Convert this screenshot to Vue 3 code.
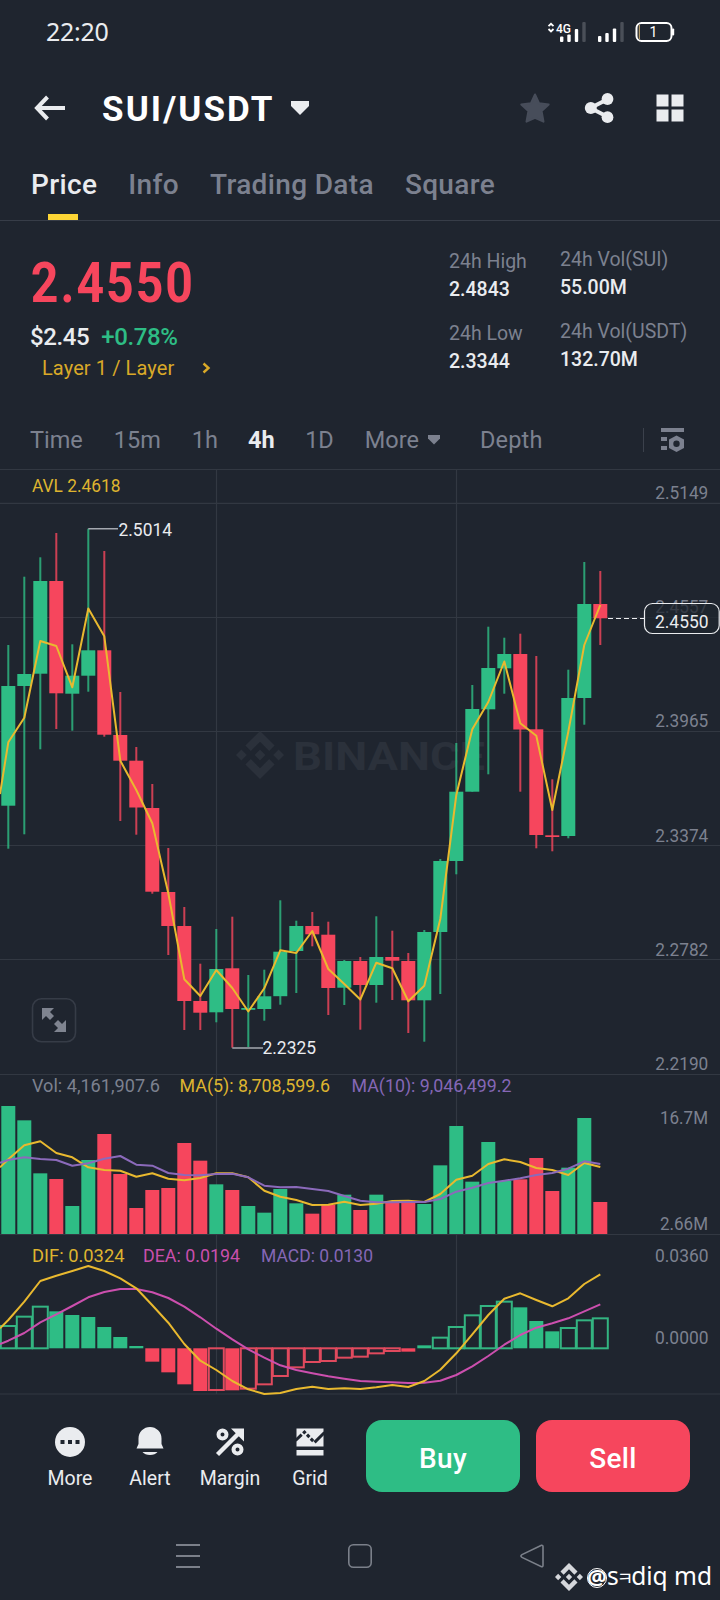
<template>
  <div class="screen">
    <div class="status">
      <span class="clock">22:20</span>
      <svg width="130" height="24" viewBox="546 20 130 24">
        <path d="M548.5 26.2 551 23.8l2.500 2.400M548.500 29l2.500 2.400 2.500-2.400" fill="none" stroke="#fff" stroke-width="1.800" />
        <text x="556" y="33" font-size="12.500" font-weight="500" fill="#fff" textLength="15" lengthAdjust="spacingAndGlyphs">4G</text>
        <g fill="#fff">
          <rect x="560" y="36.500" width="3.400" height="5.500" rx="1" />
          <rect x="567.300" y="34.500" width="3.400" height="7.500" rx="1" />
          <rect x="574.800" y="29" width="3.400" height="13" rx="1" />
          <rect x="598" y="36" width="3.400" height="6" rx="1" />
          <rect x="605.300" y="33" width="3.400" height="9" rx="1" />
          <rect x="612.800" y="28.500" width="3.400" height="13.500" rx="1" />
        </g>
        <rect x="582.300" y="22" width="3.400" height="20" rx="1" fill="#4a4f58" />
        <rect x="620.300" y="22" width="3.400" height="20" rx="1" fill="#4a4f58" />
        <rect x="636.500" y="23" width="35" height="18" rx="5" fill="none" stroke="#fff" stroke-width="2" />
        <path d="M639.300 25v14" stroke="#d9b97a" stroke-width="1" />
        <rect x="672" y="28.500" width="2.200" height="7" rx="1" fill="#fff" />
        <text x="649.500" y="37" font-size="14" fill="#fff">1</text>
      </svg>
    </div>

    <header class="header">
      <svg class="back" width="32" height="26" viewBox="0 0 32 26">
        <path d="M13.500 2 3 13l10.500 11M3 13h28" fill="none" stroke="#eaecef" stroke-width="4" />
      </svg>
      <h1 class="pair">SUI/USDT</h1>
      <svg width="20" height="14" viewBox="0 0 20 14">
        <path d="M1 0h18v5l-9 9-9-9z" fill="#eaecef" />
      </svg>
      <div class="header-icons">
        <svg width="32" height="32" viewBox="0 0 32 32">
          <path d="M16 2.500 20 11.200l9.700 1.200-7.100 6.700 1.900 10.600L16 25.900l-8.500 3.800 1.900-10.600-7.100-6.700L12 11.200z" fill="#474d5a" stroke="#474d5a" stroke-width="2" stroke-linejoin="round" />
        </svg>
        <svg width="32" height="32" viewBox="0 0 32 32">
          <path d="M25 7 7.500 16 25 25" fill="none" stroke="#eaecef" stroke-width="4" />
          <circle cx="24.500" cy="7" r="5.900" fill="#eaecef" />
          <circle cx="7.800" cy="16" r="6" fill="#eaecef" />
          <circle cx="24.500" cy="25.200" r="5.900" fill="#eaecef" />
        </svg>
        <svg width="28" height="28" viewBox="0 0 28 28">
          <path d="M.500.500h12v12H.500zM15.500.500h12v12h-12zM.500 15.500h12v12H.500zM15.500 15.500h12v12h-12z" fill="#eaecef" />
        </svg>
      </div>
    </header>

    <nav class="tabs">
      <span v-for="(tab, i) in tabs" :key="tab" class="tab" :class="{ active: i === 0 }">{{ tab }}</span>
    </nav>

    <section class="summary">
      <div class="quote">
        <div class="last">2.4550</div>
        <div class="change">
          <span class="usd">$2.45</span>
          <span class="pct">+0.78%</span>
        </div>
        <div class="category">
          <span>Layer 1 / Layer</span>
          <svg width="9" height="12" viewBox="0 0 9 12">
            <path d="M1.500 1.500 6.500 6l-5 4.500" fill="none" stroke="#d9a928" stroke-width="2.400" />
          </svg>
        </div>
      </div>
      <div class="stats prices">
        <div class="stat"><span>24h High</span><b>2.4843</b></div>
        <div class="stat"><span>24h Low</span><b>2.3344</b></div>
      </div>
      <div class="stats volumes">
        <div class="stat"><span>24h Vol(SUI)</span><b>55.00M</b></div>
        <div class="stat"><span>24h Vol(USDT)</span><b>132.70M</b></div>
      </div>
    </section>

    <div class="intervals">
      <span>Time</span>
      <span>15m</span>
      <span>1h</span>
      <span class="current">4h</span>
      <span>1D</span>
      <span class="more">
        More
        <svg width="14" height="10" viewBox="0 0 14 10"><path d="M1 0h12v3.500L7 9.500l-6-6z" fill="#7c818f" /></svg>
      </span>
      <span class="depth">Depth</span>
      <i class="divider"></i>
      <svg width="25" height="26" viewBox="0 0 25 26">
        <g fill="#7c818f">
          <path d="M1 1h23v4H1zM1 10h6v4H1zM1 19h6v4H1z" />
          <path fill-rule="evenodd" d="M16.500 8.500 24 12.500v8.500l-7.500 4-7.500-4v-8.500zM16.500 13.600a3.200 3.200 0 1 0 0 6.400 3.200 3.200 0 1 0 0-6.400z" />
        </g>
      </svg>
    </div>

    <section class="charts">
      <!-- price -->
      <svg width="720" height="605" viewBox="0 469 720 605">
        <path class="grid" d="M0 469.500H720M0 503.300H720M0 617.500H720M0 731.500H720M0 845.500H720M0 959.500H720M216.500 469V1074M456.500 469V1074" />
        <g class="mark">
          <path :d="logo" transform="translate(236 731) scale(2)" />
          <text x="293" y="770" font-size="38" font-weight="700" textLength="192" lengthAdjust="spacingAndGlyphs">BINANCE</text>
        </g>
        <text v-for="l in priceLabels" :key="l[0]" class="axis" x="655.300" :y="l[1]" textLength="53" lengthAdjust="spacingAndGlyphs">{{ l[0] }}</text>
        <g v-for="(c, i) in candles" :key="i" :class="c[0]">
          <rect :x="cx(i) - 1" :y="c[1]" width="2" :height="c[4] - c[1]" opacity="0.800" />
          <rect :x="cx(i) - 7" :y="c[2]" width="14" :height="c[3] - c[2]" />
        </g>
        <polyline class="line yellow" :points="avlPoints" />
        <path d="M88.300 528.800H118M232.300 1048H263" stroke="#a4a8b0" stroke-width="1.500" />
        <text class="yellow" x="32" y="491.700" textLength="88.500" lengthAdjust="spacingAndGlyphs">AVL 2.4618</text>
        <text class="light" x="118.500" y="536" textLength="53.500" lengthAdjust="spacingAndGlyphs">2.5014</text>
        <text class="light" x="262.500" y="1054.300" textLength="53.500" lengthAdjust="spacingAndGlyphs">2.2325</text>
        <path d="M608 618.500H644" stroke="#eaecef" stroke-width="1.200" stroke-dasharray="5 3" />
        <rect x="644.500" y="603.500" width="74.700" height="30" rx="8" fill="#1f252f" fill-opacity="0.750" stroke="#eaecef" stroke-width="1.200" />
        <text class="light" x="655" y="627.700" textLength="53.500" lengthAdjust="spacingAndGlyphs">2.4550</text>
        <rect x="32.500" y="998.800" width="43" height="43" rx="9" fill="#1f252f" stroke="#363c47" stroke-width="1.600" />
        <path d="M42 1008h12l-4 4 4 4-4 4-4-4-4 4zM66 1032H54l4-4-4-4 4-4 4 4 4-4z" fill="#7f8490" />
      </svg>

      <!-- volume -->
      <svg width="720" height="160" viewBox="0 1074 720 160">
        <path class="grid" d="M0 1074.500H720M216.500 1074V1234M456.500 1074V1234" />
        <rect v-for="(v, i) in volumes" :key="i" :class="candles[i][0]" :x="cx(i) - 7" :y="sub(v)" width="14" :height="1234 - sub(v)" />
        <polyline class="line yellow" :points="toPoints(ma5)" />
        <polyline class="line purple" :points="toPoints(ma10)" />
        <text class="axis" x="32" y="1092" textLength="128" lengthAdjust="spacingAndGlyphs">Vol: 4,161,907.6</text>
        <text class="yellow" x="179.500" y="1092" textLength="150.500" lengthAdjust="spacingAndGlyphs">MA(5): 8,708,599.6</text>
        <text class="purple" x="351.500" y="1092" textLength="160" lengthAdjust="spacingAndGlyphs">MA(10): 9,046,499.2</text>
        <text class="axis" x="660" y="1124" textLength="48" lengthAdjust="spacingAndGlyphs">16.7M</text>
        <text class="axis" x="660" y="1230" textLength="48" lengthAdjust="spacingAndGlyphs">2.66M</text>
      </svg>

      <!-- MACD -->
      <svg width="720" height="161" viewBox="0 1234 720 161">
        <path class="grid" d="M0 1234.300H720M0 1394H720M216.500 1234V1394M456.500 1234V1394" />
        <template v-for="(m, i) in macd" :key="i">
          <rect v-if="m[1]" :class="['hollow', macdSide(m[0])]" :x="cx(i) - 7.500" :y="Math.min(sub(m[0]), zero)" width="15" :height="Math.abs(sub(m[0]) - zero)" />
          <rect v-else :class="macdSide(m[0])" :x="cx(i) - 7" :y="Math.min(sub(m[0]), zero)" width="14" :height="Math.abs(sub(m[0]) - zero)" />
        </template>
        <polyline class="line pink" :points="toPoints(dea)" />
        <polyline class="line yellow" :points="toPoints(dif)" />
        <text class="yellow" x="32" y="1262" textLength="92.500" lengthAdjust="spacingAndGlyphs">DIF: 0.0324</text>
        <text class="pink" x="143" y="1262" textLength="97" lengthAdjust="spacingAndGlyphs">DEA: 0.0194</text>
        <text class="purple" x="261" y="1262" textLength="112" lengthAdjust="spacingAndGlyphs">MACD: 0.0130</text>
        <text class="axis" x="655" y="1262" textLength="53.500" lengthAdjust="spacingAndGlyphs">0.0360</text>
        <text class="axis" x="655" y="1344" textLength="53.500" lengthAdjust="spacingAndGlyphs">0.0000</text>
      </svg>
    </section>

    <footer class="actions">
      <div class="action">
        <svg width="32" height="32" viewBox="0 0 32 32">
          <circle cx="16" cy="16" r="15" fill="#eaecef" />
          <path d="M6.500 14h4v4h-4zM14 14h4v4h-4zM21.500 14h4v4h-4z" fill="#1f252f" />
        </svg>
        <span>More</span>
      </div>
      <div class="action">
        <svg width="32" height="32" viewBox="0 0 32 32">
          <path d="M2.500 22.500 4.500 18v-5.500a11.500 11.500 0 0 1 23 0V18l2 4.500zM8.500 26h15a8.500 5.500 0 0 1-15 0z" fill="#eaecef" />
        </svg>
        <span>Alert</span>
      </div>
      <div class="action">
        <svg width="32" height="32" viewBox="0 0 32 32">
          <g fill="none" stroke="#eaecef">
            <circle cx="8.500" cy="8.500" r="4" stroke-width="4" />
            <circle cx="23.500" cy="23.500" r="4" stroke-width="4" />
            <path d="M3.500 28.500 24 8" stroke-width="4.400" />
          </g>
          <path d="M17 2.500h13v13z" fill="#eaecef" />
        </svg>
        <span>Margin</span>
      </div>
      <div class="action">
        <svg width="32" height="32" viewBox="0 0 32 32">
          <path d="M2.500 2.500h27v18h-27zM2.500 24h27v5.500h-27z" fill="#eaecef" />
          <path d="M1.500 14.500 10.500 6 20.500 16.500 30.500 6.500" fill="none" stroke="#1f252f" stroke-width="3" stroke-dasharray="8.500 2 3.500 2 3.500 2 3.500 2 20" />
        </svg>
        <span>Grid</span>
      </div>
      <button class="trade buy">Buy</button>
      <button class="trade sell">Sell</button>
    </footer>

    <div class="system-nav">
      <svg width="26" height="26" viewBox="0 0 26 26"><path d="M1 2h24M1 13h24M1 24h24" stroke="#7b808a" stroke-width="2" /></svg>
      <svg width="26" height="26" viewBox="0 0 26 26"><rect x="1.800" y="1.800" width="22.400" height="22.400" rx="4.500" fill="none" stroke="#7b808a" stroke-width="1.600" /></svg>
      <svg width="26" height="26" viewBox="0 0 26 26"><path d="M22.500 2.200 3 11.600q-2.200 1.400 0 2.800l19.500 9.400q1.500.200 1.500-1.500V3.700q0-1.700-1.500-1.500z" fill="none" stroke="#7b808a" stroke-width="1.600" /></svg>
    </div>

    <div class="author">
      <svg width="28" height="28" viewBox="0 0 24 24"><path :d="logo" fill="#d5d7db" /></svg>
      <span class="handle"><span class="at">@</span>s<small>ㅋ</small>diq md</span>
    </div>
  </div>
</template>

<script setup>
const tabs = ["Price", "Info", "Trading Data", "Square"];

const logo =
  "M12 0 4.700 7.300 7.400 10 12 5.400 16.600 10l2.700-2.700zM0 12l2.700-2.700L5.400 12l-2.700 2.700zM9.300 12 12 9.300l2.700 2.700-2.700 2.700zM18.600 12l2.700-2.700L24 12l-2.700 2.700zM4.700 16.700 7.400 14l4.600 4.600 4.600-4.600 2.700 2.700L12 24z";

const priceLabels = [
  ["2.5149", 499.3],
  ["2.4557", 613.3],
  ["2.3965", 727],
  ["2.3374", 842.3],
  ["2.2782", 956.3],
  ["2.2190", 1070.3],
];

// direction, high, body top, body bottom, low
const candles = [
  ["up", 645, 686, 805.7, 848.7],
  ["up", 576.7, 674, 686, 834.3],
  ["up", 557.3, 581, 673.7, 749.3],
  ["down", 533, 581, 693.3, 729],
  ["up", 644.3, 675.7, 693.7, 730.7],
  ["up", 528.7, 650.3, 675.7, 691.7],
  ["down", 551, 650.3, 734.7, 736.7],
  ["down", 692, 735, 760.7, 821],
  ["down", 747, 760.7, 807.5, 834.7],
  ["down", 784, 808, 891.7, 893.7],
  ["down", 848, 892, 926, 955],
  ["down", 907, 926, 1001, 1030],
  ["down", 963.7, 1001, 1012.7, 1030],
  ["up", 929, 969, 1012.3, 1022.3],
  ["down", 916.7, 968.3, 1009, 1047.7],
  ["up", 975, 1008, 1009.8, 1047],
  ["up", 969.7, 996.3, 1009, 1020.7],
  ["up", 900.3, 951.7, 996.2, 1004.7],
  ["up", 920.7, 926, 951, 993],
  ["down", 912, 926, 934.3, 946.3],
  ["down", 921.7, 934.7, 988, 1015],
  ["up", 960, 961, 987.7, 1005],
  ["down", 957, 961, 985, 1029.7],
  ["up", 916.3, 957, 985, 1002.7],
  ["down", 930.7, 957, 960.7, 1000],
  ["down", 953, 961, 1000.3, 1033],
  ["up", 930, 932, 1000.3, 1041.7],
  ["up", 859, 861, 932, 994],
  ["up", 743, 791.7, 861, 874.3],
  ["up", 685, 709, 791.7, 791.7],
  ["up", 626.7, 668, 709.3, 774.3],
  ["up", 637.7, 654, 668.3, 693.7],
  ["down", 633.7, 654, 729.5, 791.7],
  ["down", 656, 729.3, 835, 848.3],
  ["down", 779.3, 835.3, 837, 851.3],
  ["up", 669.7, 698, 836, 838.3],
  ["up", 562, 604, 698, 724.7],
  ["down", 571, 604, 618.3, 645],
];

const avl = [
  742.3, 717.7, 641, 646, 687.3, 608.5, 636.3, 760.7, 790, 823.3, 893.3, 979.3, 996, 970, 988,
  1011.5, 988.3, 950.3, 953, 931, 969, 984, 999.5, 962.7, 968.3, 1001.3, 985.7, 919, 795, 729.3,
  702, 661.5, 723.3, 735.7, 810, 731.7, 645, 605,
];

// the two lower panes are laid out in thirds of a pixel from y = 1070
const volumes = [
  108, 151, 310, 327, 408, 270, 192, 312, 414, 360, 354, 219, 272, 343, 360, 408, 428, 357, 400, 431,
  404, 374, 420, 374, 396, 396, 402, 286, 168, 335, 216, 333, 328, 264, 363, 293, 144, 396,
];
const ma5 = [
  292, 268, 226, 214, 249, 262, 292, 300, 302, 320, 310, 326, 331, 324, 310, 310, 322, 362, 380, 390,
  405, 404, 395, 405, 401, 393, 392, 396, 372, 329, 317, 282, 268, 276, 294, 300, 315, 279, 291,
];
const ma10 = [
  278, 270, 262, 267, 270, 287, 280, 266, 258, 284, 287, 309, 315, 316, 312, 311, 322, 347, 352, 351,
  357, 363, 378, 392, 397, 397, 396, 396, 387, 365, 353, 339, 332, 325, 315, 309, 296, 274, 282,
];
const dif = [
  775, 750, 695, 633, 617, 603, 588, 603, 625, 655, 706, 758, 822, 872, 900, 933, 958, 972, 969, 957,
  950, 957, 955, 957, 952, 945, 951, 933, 899, 850, 793, 735, 686, 670, 690, 709, 685, 642, 613,
];
const dea = [
  822, 812, 789, 757, 733, 708, 682, 666, 657, 657, 667, 684, 710, 742, 776, 808, 838, 863, 886, 900,
  910, 919, 926, 933, 935, 937, 939, 938, 932, 915, 889, 858, 824, 795, 773, 760, 745, 724, 703,
];
// edge of the bar, hollow or not
const macd = [
  [768, 1], [740, 1], [710, 1], [724, 0], [735, 0], [741, 0], [771, 0], [801, 0], [828, 0], [875, 0],
  [907, 0], [943, 0], [963, 0], [960, 1], [961, 0], [956, 1], [943, 1], [918, 1], [892, 1], [876, 1],
  [873, 1], [863, 1], [860, 1], [850, 1], [843, 1], [845, 0], [826, 0], [803, 1], [771, 1], [736, 1],
  [708, 1], [695, 1], [712, 0], [753, 0], [784, 0], [774, 1], [751, 1], [745, 1],
];

const zero = 1348.3;

const cx = (i) => 8.3 + i * 16;
const sub = (v) => 1070 + v / 3;
const macdSide = (v) => (sub(v) < zero ? "up" : "down");

// first value is where the line enters at the left edge
const toPoints = (values) =>
  values.map((v, i) => `${i === 0 ? 0 : cx(i - 1)},${sub(v).toFixed(1)}`).join(" ");

const avlPoints = ["0,794", ...avl.map((y, i) => `${cx(i)},${y}`)].join(" ");
</script>

<style>
body {
  background: #1f252f;
}
</style>

<style scoped>
.screen {
  position: relative;
  width: 720px;
  height: 1600px;
  overflow: hidden;
  background: #1f252f;
  color: #eaecef;
  font-family: Roboto, "Noto Sans", sans-serif;
}

svg {
  display: block;
  flex: none;
}

.status {
  display: flex;
  align-items: center;
  justify-content: space-between;
  height: 64px;
  padding: 0 44px 0 46px;
}

.clock {
  padding-bottom: 2px;
  font-family: "Noto Sans", sans-serif;
  font-size: 25px;
  letter-spacing: -0.3px;
}

.header {
  display: flex;
  align-items: center;
  height: 88px;
  padding: 0 36px 0 34px;
}

.pair {
  margin: 0 15px 0 36px;
  padding-top: 4px;
  font-size: 35px;
  line-height: 40px;
  font-weight: 700;
  letter-spacing: 2.1px;
  color: #fff;
}

.header-icons {
  display: flex;
  align-items: center;
  margin-left: auto;
}

.header-icons svg + svg {
  margin-left: 32px;
}

.header-icons svg:last-child {
  margin-left: 41px;
}

.tabs {
  display: flex;
  gap: 31px;
  height: 68px;
  padding-left: 31px;
  border-bottom: 1px solid #373d48;
}

.tab {
  position: relative;
  padding-top: 16px;
  font-size: 28px;
  line-height: 33px;
  font-weight: 500;
  letter-spacing: 0.35px;
  color: #7c818f;
}

.tab.active {
  color: #eaecef;
}

.tab.active::after {
  content: "";
  position: absolute;
  left: 50%;
  bottom: 0;
  width: 30px;
  height: 6px;
  margin-left: -16px;
  background: #fcd535;
}

.summary {
  display: flex;
  height: 190px;
  padding-left: 30px;
}

.quote {
  width: 419px;
  padding-top: 30px;
}

/* condensed digits with open spacing */
.last {
  font-size: 56px;
  line-height: 64px;
  font-weight: 700;
  letter-spacing: 2.3px;
  transform: scaleX(0.86);
  transform-origin: 0 50%;
  padding-left: 1px;
  color: #f6465d;
}

.change {
  display: flex;
  gap: 12px;
  margin-top: 7px;
  font-size: 24px;
  line-height: 30px;
  font-weight: 500;
  letter-spacing: -0.4px;
}

.pct {
  color: #2ebd85;
}

.category {
  display: flex;
  align-items: center;
  gap: 28px;
  padding: 4px 0 0 12px;
  font-size: 20px;
  line-height: 24px;
  letter-spacing: 0.1px;
  color: #d9a928;
}

.stats {
  display: flex;
  flex-direction: column;
  gap: 16px;
}

.prices {
  width: 111px;
  padding-top: 27px;
}

.volumes {
  padding-top: 24.500px;
}

.stat {
  display: flex;
  flex-direction: column;
  font-size: 19.500px;
  line-height: 28px;
  color: #7c818f;
  white-space: nowrap;
}

.stat b {
  font-weight: 500;
  color: #eaecef;
}

.intervals {
  display: flex;
  align-items: center;
  gap: 31px;
  height: 58px;
  padding: 0 35px 0 30px;
  font-size: 23.500px;
  color: #7c818f;
}

.intervals .current {
  margin: 0 -0.500px 0 -1px;
  font-weight: 700;
  color: #eaecef;
}

.more {
  display: flex;
  align-items: center;
  gap: 8px;
}

.depth {
  margin-left: 8px;
  letter-spacing: 0.2px;
}

.divider {
  width: 1px;
  height: 24px;
  margin: 0 -15px 0 auto;
  background: #3b414c;
}

.charts text {
  font-size: 18.800px;
}

.charts .mark text {
  font-size: 38px;
}

.charts .mark {
  fill: #2b313b;
}

.grid {
  fill: none;
  stroke: #323842;
  stroke-width: 1.200;
}

.axis {
  fill: #7c818f;
}

.light {
  fill: #eaecef;
}

.up {
  fill: #2ebd85;
}

.down {
  fill: #f6465d;
}

.yellow {
  fill: #deb42f;
}

.purple {
  fill: #8567b6;
}

.pink {
  fill: #c94fac;
}

.line {
  fill: none;
  stroke-width: 2;
  stroke-linejoin: round;
}

.line.yellow {
  stroke: #e9b92f;
}

.line.purple {
  stroke: #8b6abb;
}

.line.pink {
  stroke: #cc4fae;
}

.hollow {
  fill: none;
  stroke-width: 2;
}

.hollow.up {
  stroke: #33b481;
}

.hollow.down {
  stroke: #e04a5e;
}

.actions {
  display: flex;
  height: 96px;
  padding: 25px 30px 0;
}

.action {
  display: flex;
  flex-direction: column;
  align-items: center;
  gap: 9px;
  width: 80px;
  padding-top: 6px;
  font-size: 19.500px;
  line-height: 24px;
}

.trade {
  width: 154px;
  height: 72px;
  padding: 5px 0 0;
  border: 0;
  border-radius: 16px;
  font-family: inherit;
  font-size: 28px;
  font-weight: 500;
  letter-spacing: 0.3px;
  color: #fff;
}

.buy {
  margin-left: 16px;
  background: #2ebd85;
}

.sell {
  margin-left: 16px;
  background: #f6465d;
}

.system-nav {
  display: flex;
  justify-content: space-between;
  align-items: center;
  height: 80px;
  padding: 0 175px;
}

/* floats over the system bar */
.author {
  position: absolute;
  right: 8px;
  bottom: 5px;
  display: flex;
  align-items: center;
  gap: 4px;
}

.handle {
  font-family: "Noto Sans", "Noto Sans CJK KR", sans-serif;
  font-size: 24.500px;
  line-height: 34px;
  color: #fff;
  white-space: nowrap;
}

.at {
  position: relative;
  font-weight: 700;
  font-size: 22px;
}

.at::after {
  content: "";
  position: absolute;
  left: 0;
  top: 7px;
  width: 18px;
  height: 18px;
  border: 1.500px solid #fff;
  border-radius: 50%;
}

.handle small {
  margin: 0 -2px;
  font-size: 18px;
}
</style>
